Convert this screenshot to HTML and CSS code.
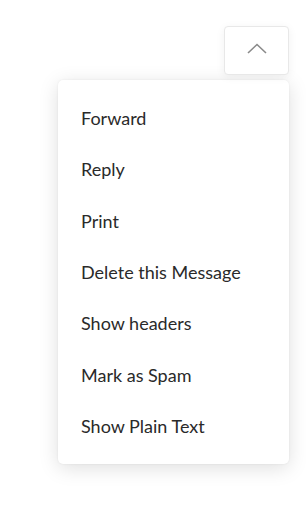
FILE: index.html
```html
<!DOCTYPE html>
<html>
<head>
<meta charset="utf-8">
<link rel="stylesheet" href="styles.css">
</head>
<body>
<div class="wrap">
  <div class="toggle-row">
    <button class="toggle" aria-label="Collapse">
      <svg width="20" height="11" viewBox="0 0 20 11"><path d="M1 10 L10 1.5 L19 10" fill="none" stroke="#8a8a8a" stroke-width="1.6"/></svg>
    </button>
  </div>
  <ul class="menu">
    <li class="item">Forward</li>
    <li class="item">Reply</li>
    <li class="item">Print</li>
    <li class="item">Delete this Message</li>
    <li class="item">Show headers</li>
    <li class="item">Mark as Spam</li>
    <li class="item">Show Plain Text</li>
  </ul>
</div>
</body>
</html>
```
FILE: styles.css
```css
html, body {
  margin: 0;
  padding: 0;
  background: #fff;
}
body {
  font-family: Lato, "Open Sans", sans-serif;
  color: #2a2a2a;
}
.wrap {
  width: 306px;
  padding-top: 26px;
  padding-bottom: 44px;
}
.toggle-row {
  display: flex;
  justify-content: flex-end;
  padding-right: 17px;
}
.toggle {
  width: 65px;
  height: 49px;
  border: 1px solid #e8e8e8;
  border-radius: 4px;
  background: #fff;
  box-shadow: 0 2px 10px rgba(0,0,0,0.06);
  display: flex;
  align-items: center;
  justify-content: center;
  padding: 0;
  padding-bottom: 4px;
}
.toggle svg { display: block; }
.menu {
  list-style: none;
  margin: 5px 0 0 58px;
  width: 231px;
  padding: 12px 0;
  background: #fff;
  border-radius: 5px;
  box-shadow: 0 4px 20px rgba(0,0,0,0.13), 0 0 2px rgba(0,0,0,0.08);
}
.item {
  height: 51.43px;
  display: flex;
  align-items: center;
  padding-left: 23px;
  font-size: 18px;
}
```
